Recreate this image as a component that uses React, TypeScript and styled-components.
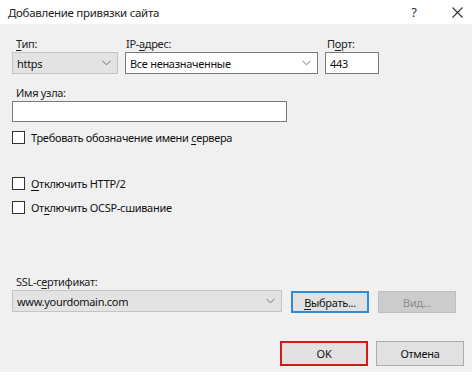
import React from 'react';
import styled, { createGlobalStyle } from 'styled-components';

const GlobalStyle = createGlobalStyle`
  html, body {
    margin: 0;
    padding: 0;
    background: #ffffff;
  }
  body {
    font-family: 'Noto Sans', 'Open Sans', sans-serif;
    font-size: 11px;
    letter-spacing: -0.3px;
    color: #111;
  }
`;

const Window = styled.div`
  width: 474px;
  height: 376px;
  background: #ffffff;
  display: flex;
  flex-direction: column;
  overflow: hidden;
`;

const TitleBar = styled.div`
  height: 24px;
  display: flex;
  align-items: center;
  padding-left: 8px;
  box-sizing: border-box;
`;

const Title = styled.div`
  flex: 1;
  font-size: 11.5px;
  color: #222;
`;

const TitleButton = styled.div<{ $width: number }>`
  width: ${(p) => p.$width}px;
  display: flex;
  justify-content: center;
  align-items: center;
  color: #333;
  font-size: 13px;
`;

const Body = styled.div`
  flex: 1;
  margin: 0 2px 4px 0;
  background: #f0f0f0;
  padding: 13px 8px 0 12px;
  box-sizing: border-box;
  display: flex;
  flex-direction: column;
`;

const Row = styled.div<{ $top?: number; $gap?: number; $padRight?: number }>`
  display: flex;
  align-items: flex-start;
  gap: ${(p) => p.$gap ?? 0}px;
  margin-top: ${(p) => p.$top ?? 0}px;
  padding-right: ${(p) => p.$padRight ?? 0}px;
`;

const Field = styled.div<{ $width: number }>`
  width: ${(p) => p.$width}px;
  display: flex;
  flex-direction: column;
  gap: 1px;
`;

const Label = styled.div<{ $indent?: number }>`
  height: 14px;
  line-height: 14px;
  padding-left: ${(p) => p.$indent ?? 4}px;
  color: #222;
`;

const U = styled.span`
  text-decoration: underline;
  text-underline-offset: 2px;
`;

const Select = styled.div<{ $light?: boolean; $height?: number }>`
  height: ${(p) => p.$height ?? 22}px;
  box-sizing: border-box;
  border: 1px solid ${(p) => (p.$light ? '#7a7a7a' : '#c4c4c4')};
  background: ${(p) => (p.$light ? '#ffffff' : '#e3e3e3')};
  display: flex;
  align-items: center;
  padding: 0 6px 0 4px;
  color: #111;
`;

const SelectText = styled.div`
  flex: 1;
  white-space: nowrap;
`;

const Input = styled.div<{ $height?: number }>`
  height: ${(p) => p.$height ?? 22}px;
  box-sizing: border-box;
  border: 1px solid #7a7a7a;
  background: #ffffff;
  display: flex;
  align-items: center;
  padding: 0 4px;
`;

const CheckRow = styled.label<{ $top: number }>`
  display: flex;
  align-items: center;
  gap: 6px;
  margin-top: ${(p) => p.$top}px;
  height: 14px;
`;

const Box = styled.span`
  width: 13px;
  height: 13px;
  box-sizing: border-box;
  border: 1px solid #333;
  background: #ffffff;
`;

const Spacer = styled.div`
  flex: 1;
`;

const Button = styled.div<{
  $width: number;
  $height: number;
  $variant?: 'focus' | 'disabled' | 'default';
}>`
  width: ${(p) => p.$width}px;
  height: ${(p) => p.$height}px;
  box-sizing: border-box;
  display: flex;
  align-items: center;
  justify-content: center;
  background: ${(p) => (p.$variant === 'disabled' ? '#cccccc' : '#e1e1e1')};
  color: ${(p) => (p.$variant === 'disabled' ? '#8d8d8d' : '#111')};
  border: ${(p) =>
    p.$variant === 'focus'
      ? '2px solid #2f8ad8'
      : p.$variant === 'default'
      ? '2px solid #d21a1a'
      : p.$variant === 'disabled'
      ? '1px solid #bfbfbf'
      : '1px solid #adadad'};
`;

const Chevron = () => (
  <svg width="9" height="6" viewBox="0 0 9 6">
    <path d="M0.5 0.8 L4.5 4.8 L8.5 0.8" fill="none" stroke="#6d6d6d" strokeWidth="1" />
  </svg>
);

const CloseIcon = () => (
  <svg width="11" height="11" viewBox="0 0 11 11">
    <path d="M0.5 0.5 L10.5 10.5 M10.5 0.5 L0.5 10.5" stroke="#333" strokeWidth="1.1" />
  </svg>
);

const App = () => {
  return (
    <Window>
      <GlobalStyle />
      <TitleBar>
        <Title>Добавление привязки сайта</Title>
        <TitleButton $width={32}>?</TitleButton>
        <TitleButton $width={10} />
        <TitleButton $width={34}>
          <CloseIcon />
        </TitleButton>
      </TitleBar>
      <Body>
        <Row $gap={7}>
          <Field $width={106}>
            <Label>
              <U>Т</U>ип:
            </Label>
            <Select>
              <SelectText>https</SelectText>
              <Chevron />
            </Select>
          </Field>
          <Field $width={193}>
            <Label $indent={1}>
              IP-<U>а</U>дрес:
            </Label>
            <Select $light>
              <SelectText>Все неназначенные</SelectText>
              <Chevron />
            </Select>
          </Field>
          <Field $width={54}>
            <Label $indent={2}>
              П<U>о</U>рт:
            </Label>
            <Input>443</Input>
          </Field>
        </Row>
        <Row $top={12}>
          <Field $width={275}>
            <Label>Имя узла:</Label>
            <Input $height={21} />
          </Field>
        </Row>
        <CheckRow $top={8}>
          <Box />
          <span>
            Требовать обозначение имени <U>с</U>ервера
          </span>
        </CheckRow>
        <CheckRow $top={32}>
          <Box />
          <span>
            <U>О</U>тключить HTTP/2
          </span>
        </CheckRow>
        <CheckRow $top={10}>
          <Box />
          <span>
            От<U>к</U>лючить OCSP-сшивание
          </span>
        </CheckRow>
        <Row $top={61}>
          <Field $width={270}>
            <Label>
              SSL-с<U>е</U>ртификат:
            </Label>
            <Select>
              <SelectText>www.yourdomain.com</SelectText>
              <Chevron />
            </Select>
          </Field>
        </Row>
        <Row $top={-21} $gap={9} $padRight={8}>
          <Spacer />
          <Button $width={78} $height={22} $variant="focus">
            <span>
              <U>В</U>ыбрать...
            </span>
          </Button>
          <Button $width={78} $height={22} $variant="disabled">
            Вид...
          </Button>
        </Row>
        <Row $top={28} $gap={8}>
          <Spacer />
          <Button $width={88} $height={25} $variant="default">
            OK
          </Button>
          <Button $width={88} $height={25}>
            Отмена
          </Button>
        </Row>
      </Body>
    </Window>
  );
};

export default App;
